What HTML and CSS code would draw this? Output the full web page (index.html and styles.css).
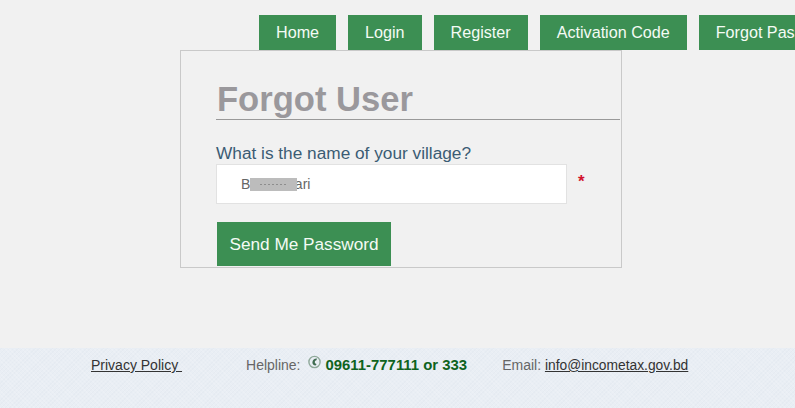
FILE: index.html
```html
<!DOCTYPE html>
<html>
<head>
    <meta charset="UTF-8">
    <meta name="viewport" content="width=device-width, initial-scale=1.0">
    <title>Forgot User</title>
    <link rel="stylesheet" href="styles.css">
</head>
<body>
    <div class="page">
        <ul class="nav">
            <li><a href="#">Home</a></li>
            <li><a href="#">Login</a></li>
            <li><a href="#">Register</a></li>
            <li><a href="#">Activation Code</a></li>
            <li><a href="#">Forgot Password</a></li>
        </ul>

        <div class="panel">
            <h1>Forgot User</h1>
            <label class="question">What is the name of your village?</label>
            <div class="field-row">
                <div class="field">B<span class="redacted"></span>ari</div>
                <span class="required">*</span>
            </div>
            <button class="btn">Send Me Password</button>
        </div>
    </div>

    <div class="footer">
        <a class="privacy" href="#">Privacy Policy&nbsp;</a>
        <span class="helpline">Helpline:</span>
        <svg class="phone-icon" width="13" height="14" viewBox="0 0 13 14">
            <circle cx="6.5" cy="7" r="5.6" fill="none" stroke="#8fa99a" stroke-width="1.4"/>
            <path d="M9 3.6C6.4 3.4 4.6 5 4.4 7.2C4.3 8.8 5.4 10.2 7.6 10.5L8.6 9C7.4 8.9 6.7 8.2 6.8 7.1C6.9 6 7.6 5.4 8.4 5.3Z" fill="#3f6b50"/>
        </svg>
        <span class="phone">09611-777111 or 333</span>
        <span class="email">Email: <a href="#">info@incometax.gov.bd</a></span>
    </div>
</body>
</html>
```

FILE: styles.css
```css
html, body {
    height: 100%;
}
body {
    font-family: "Liberation Sans", Arial, sans-serif;
    background: #f1f1f1;
    margin: 0;
    overflow: hidden;
    display: flex;
    flex-direction: column;
}
.page {
    flex: 1;
    padding-top: 15px;
}
.nav {
    list-style: none;
    margin: 0 0 0 259px;
    padding: 0;
    display: flex;
    gap: 12px;
    width: max-content;
}
.nav a {
    display: block;
    background: #3c8f53;
    color: #f4fbf5;
    font-size: 16.15px;
    line-height: 35px;
    padding: 0 17px;
    text-decoration: none;
}
.panel {
    box-sizing: border-box;
    width: 442px;
    height: 218px;
    margin-left: 180px;
    padding: 27px 1px 0 35px;
    border: 1px solid #c9c9c9;
}
h1 {
    color: #9a989c;
    font-size: 34.6px;
    line-height: 42px;
    margin: 0 0 23px;
    padding-left: 1px;
    border-bottom: 1px solid #999;
    height: 41px;
}
.question {
    display: block;
    color: #3b5c74;
    font-size: 17.25px;
    line-height: 21px;
}
.field-row {
    display: flex;
    align-items: center;
}
.field {
    box-sizing: border-box;
    width: 351px;
    height: 40px;
    background: #fff;
    border: 1px solid #e2e2e2;
    color: #666;
    font-size: 14px;
    line-height: 38px;
    padding-left: 24px;
}
.redacted {
    position: relative;
    display: inline-block;
    width: 47px;
    height: 13px;
    margin-right: -2.5px;
    vertical-align: -2px;
    background: repeating-linear-gradient(90deg, #8d8d8d 0 2px, transparent 2px 4px) center / 60% 1px no-repeat, #bcbcbc;
}
.required {
    color: #d2122e;
    font-size: 17px;
    font-weight: bold;
    margin: 0 0 4px 11px;
}
.btn {
    display: block;
    height: 44px;
    width: 174px;
    margin: 18px 0 0 1px;
    padding: 0;
    background: #3c8f53;
    color: #f4fbf5;
    border: none;
    font-family: inherit;
    font-size: 17.2px;
}
.footer {
    box-sizing: border-box;
    height: 60px;
    padding: 8px 0 0 91px;
    display: flex;
    align-items: flex-start;
    background-color: #e9eef4;
    background-image:
        repeating-linear-gradient(45deg, rgba(255,255,255,0.14) 0 1px, transparent 1px 3px),
        repeating-linear-gradient(-45deg, rgba(205,214,226,0.14) 0 1px, transparent 1px 3px);
    color: #666;
    font-size: 14px;
    line-height: 18px;
}
.footer a {
    color: #333;
}
.privacy {
    margin-right: 64px;
}
.phone-icon {
    margin: -1px 5px 0 7px;
}
.phone {
    color: #0f6320;
    font-size: 14.9px;
    font-weight: bold;
    margin-right: 35px;
}
.email a {
    font-size: 13.8px;
}
```
